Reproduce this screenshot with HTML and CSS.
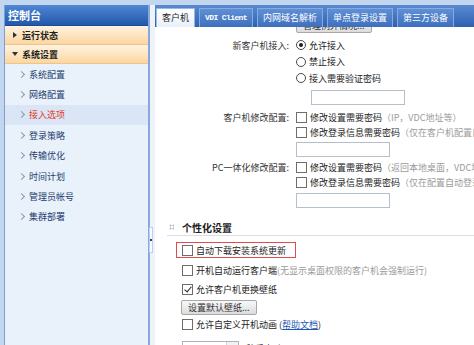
FILE: index.html
```html
<!DOCTYPE html>
<html lang="zh-CN">
  <head>
    <meta charset="UTF-8" />
    <meta name="viewport" content="width=device-width, initial-scale=1.0" />
    <title>控制台 - 接入选项</title>
    <link rel="stylesheet" href="styles.css">
  </head>
  <body>
    <div class="frame">
      <!-- 左侧菜单 -->
      <aside class="sidebar">
        <div class="sidebar-title">控制台</div>
        <div class="group-head">运行状态</div>
        <div class="group-head open">系统设置</div>
        <ul class="menu">
          <li>系统配置</li>
          <li>网络配置</li>
          <li class="active">接入选项</li>
          <li>登录策略</li>
          <li>传输优化</li>
          <li>时间计划</li>
          <li>管理员帐号</li>
          <li>集群部署</li>
        </ul>
      </aside>

      <div class="splitter"><span class="grip"></span></div>

      <!-- 右侧内容 -->
      <main class="panel">
        <nav class="tabs">
          <span class="tab active">客户机</span>
          <span class="tab mono">VDI Client</span>
          <span class="tab">内网域名解析</span>
          <span class="tab">单点登录设置</span>
          <span class="tab">第三方设备</span>
        </nav>

        <div class="content">
          <div class="row first">
            <div class="label"></div>
            <div class="controls">
              <button class="btn">管理例外情况...</button>
            </div>
          </div>

          <div class="row group-a">
            <div class="label line">新客户机接入:</div>
            <div class="controls">
              <div class="line"><span class="radio on"></span>允许接入</div>
              <div class="line"><span class="radio"></span>禁止接入</div>
              <div class="line"><span class="radio"></span>接入需要验证密码</div>
              <input class="field indent" type="password" />
            </div>
          </div>

          <div class="row group-b">
            <div class="label line tight">客户机修改配置:</div>
            <div class="controls">
              <div class="line tight"><span class="check"></span>修改设置需要密码<span class="hint">（IP，VDC地址等）</span></div>
              <div class="line tight"><span class="check"></span>修改登录信息需要密码<span class="hint">（仅在客户机配置自动登录时有效）</span></div>
              <input class="field" type="password" />
            </div>
          </div>

          <div class="row group-c">
            <div class="label line tight">PC一体化修改配置:</div>
            <div class="controls">
              <div class="line tight"><span class="check"></span>修改设置需要密码<span class="hint">（返回本地桌面，VDC地址等）</span></div>
              <div class="line tight"><span class="check"></span>修改登录信息需要密码<span class="hint">（仅在配置自动登录时有效）</span></div>
              <input class="field" type="password" />
            </div>
          </div>

          <div class="section"><span class="dots"></span>个性化设置</div>

          <div class="highlight"><span class="check"></span>自动下载安装系统更新</div>
          <div class="opt gap4"><span class="check"></span>开机自动运行客户端<span class="hint">(无显示桌面权限的客户机会强制运行)</span></div>
          <div class="opt gap3"><span class="check on"></span>允许客户机更换壁纸</div>
          <button class="btn wall">设置默认壁纸...</button>
          <div class="opt gap1"><span class="check"></span>允许自定义开机动画 (<span class="link">帮助文档</span>)</div>
          <div class="opt last"><span class="select"><span class="arrow"></span></span>秒后启动</div>
        </div>
      </main>
    </div>
  </body>
</html>
```

FILE: styles.css
```css
* {
  margin: 0;
  padding: 0;
  box-sizing: border-box;
}

body {
  font-family: "Noto Sans CJK SC", "Liberation Sans", sans-serif;
  font-size: 9px;
  color: #222;
  background: #c3d6ef;
  overflow: hidden;
}

.frame {
  display: flex;
  height: 100vh;
  padding: 5px 0 0 4px;
}

/* 左侧菜单 */
.sidebar {
  width: 146px;
  flex: none;
  background: #e9f1fb;
  border-left: 1px solid #7d9fd3;
  border-right: 2px solid #86a8dc;
}

.sidebar-title {
  height: 21px;
  line-height: 20px;
  padding-left: 3px;
  color: #fff;
  font-size: 11px;
  font-weight: bold;
  background: linear-gradient(#4f88d4, #2258ab);
  border-bottom: 1px solid #1d4c96;
}

.group-head {
  height: 19px;
  display: flex;
  align-items: center;
  padding-left: 8px;
  font-weight: bold;
  color: #1f1f1f;
  background: linear-gradient(#fff3e1, #fbd6a0);
  border-bottom: 1px solid #efc58e;
}

.group-head::before {
  content: "";
  width: 0;
  height: 0;
  margin-right: 5px;
  border-left: 4px solid #333;
  border-top: 3px solid transparent;
  border-bottom: 3px solid transparent;
}

.group-head.open::before {
  margin-left: -1px;
  margin-right: 4px;
  border-top: 4px solid #333;
  border-left: 3px solid transparent;
  border-right: 3px solid transparent;
  border-bottom: 0;
}

.menu {
  list-style: none;
}

.menu li {
  height: 20.4px;
  display: flex;
  align-items: center;
  padding-left: 14px;
  color: #233c6e;
}

.menu li::before {
  content: "";
  width: 4px;
  height: 4px;
  margin-right: 5px;
  border-top: 1px solid #8a97ae;
  border-right: 1px solid #8a97ae;
  transform: rotate(45deg);
}

.menu li.active {
  background: #dae5f5;
  color: #e2392b;
}

/* 分隔条 */
.splitter {
  width: 5px;
  flex: none;
  background: #eef3fa;
  padding-top: 222px;
}

.grip {
  display: flex;
  align-items: center;
  justify-content: center;
  width: 4px;
  height: 26px;
  margin-left: -1px;
  background: #f8fbff;
  border: 1px solid #bcd0ec;
}

.grip::after {
  content: "";
  width: 2px;
  height: 2px;
  background: #444;
}

/* 右侧面板 */
.panel {
  flex: 1;
  min-width: 0;
  display: flex;
  flex-direction: column;
  background: #fff;
}

.tabs {
  height: 22px;
  flex: none;
  display: flex;
  align-items: flex-end;
  gap: 4px;
  padding-left: 1px;
  background: linear-gradient(#5a8bd2, #2d61b1);
}

.tab {
  height: 19px;
  line-height: 18px;
  padding: 0 5px;
  color: #fff;
  white-space: nowrap;
  border: 1px solid #88aadf;
  border-bottom: 0;
  background: linear-gradient(#5f90d6, #3d6fbd);
}

.tab.active {
  color: #222;
  border-color: #9ab8e4;
  background: linear-gradient(#ffffff, #e9f0fa);
}

.tab.mono {
  font-family: "Liberation Mono", monospace;
  font-size: 8px;
  font-weight: bold;
  letter-spacing: -0.6px;
}

.content {
  flex: 1;
  overflow: hidden;
  white-space: nowrap;
}

.row {
  display: flex;
}

.row.first {
  margin-top: -9px;
}

.group-a {
  margin-top: 4px;
}

.group-b {
  margin-top: 5px;
}

.group-c {
  margin-top: 3px;
}

.label {
  width: 141px;
  flex: none;
  padding-right: 7px;
  justify-content: flex-end;
  color: #333;
}

.controls {
  flex: 1;
  min-width: 0;
}

.line {
  height: 16.5px;
  display: flex;
  align-items: center;
}

.line.tight {
  height: 15px;
}

.radio {
  width: 10px;
  height: 10px;
  flex: none;
  margin-right: 3px;
  display: flex;
  align-items: center;
  justify-content: center;
  border: 1px solid #4a4a4a;
  border-radius: 50%;
  background: #fff;
}

.radio.on::after {
  content: "";
  width: 4px;
  height: 4px;
  border-radius: 50%;
  background: #1e1e1e;
}

.check {
  position: relative;
  width: 11px;
  height: 11px;
  flex: none;
  margin-right: 3px;
  border: 1px solid #6d6d6d;
  background: #fff;
}

.check.on::after {
  content: "";
  position: absolute;
  left: 3px;
  top: 0;
  width: 3px;
  height: 6px;
  border-right: 1.5px solid #222;
  border-bottom: 1.5px solid #222;
  transform: rotate(40deg);
}

.hint {
  color: #9a9a9a;
}

.field {
  display: block;
  width: 94px;
  height: 15px;
  margin-top: 2.5px;
  border: 1px solid #b5bfca;
  background: #fff;
}

.group-a .field {
  margin-top: 3px;
}

.field.indent {
  margin-left: 15px;
}

.group-c .field {
  margin-top: 3px;
}

.btn {
  display: block;
  height: 15px;
  padding: 0 6px;
  font: inherit;
  line-height: 13px;
  color: #333;
  border: 1px solid #a8a8a8;
  border-radius: 2px;
  background: linear-gradient(#f8f8f8, #dcdcdc);
}

/* 个性化设置 */
.section {
  height: 17px;
  margin: 11px 0 0 12px;
  display: flex;
  align-items: center;
  font-size: 10px;
  font-weight: bold;
  color: #222;
  border-bottom: 1px solid #d9dee6;
}

.dots {
  width: 5px;
  height: 6px;
  margin: 0 8px 0 2px;
  background: radial-gradient(circle, #aeb6c2 0.9px, transparent 1.1px) 0 0 / 3px 3px;
}

.highlight {
  width: 120px;
  height: 16px;
  margin: 6px 0 0 21px;
  padding-left: 5px;
  display: flex;
  align-items: center;
  border: 1px solid #e14b4b;
}

.opt {
  height: 16px;
  margin-left: 27px;
  display: flex;
  align-items: center;
}

.gap4 {
  margin-top: 4px;
}

.gap3 {
  margin-top: 3px;
}

.gap1 {
  margin-top: 1px;
}

.btn.wall {
  margin: 3px 0 0 26px;
}

.link {
  color: #1f57b5;
  text-decoration: underline;
}

.opt.last {
  margin-top: 8px;
  color: #333;
}

.select {
  width: 57px;
  height: 15px;
  margin-right: 7px;
  display: flex;
  justify-content: flex-end;
  border: 1px solid #aab3bf;
}

.arrow {
  width: 12px;
  border-left: 1px solid #cfd5dd;
  background: #f2f2f2;
}
```
